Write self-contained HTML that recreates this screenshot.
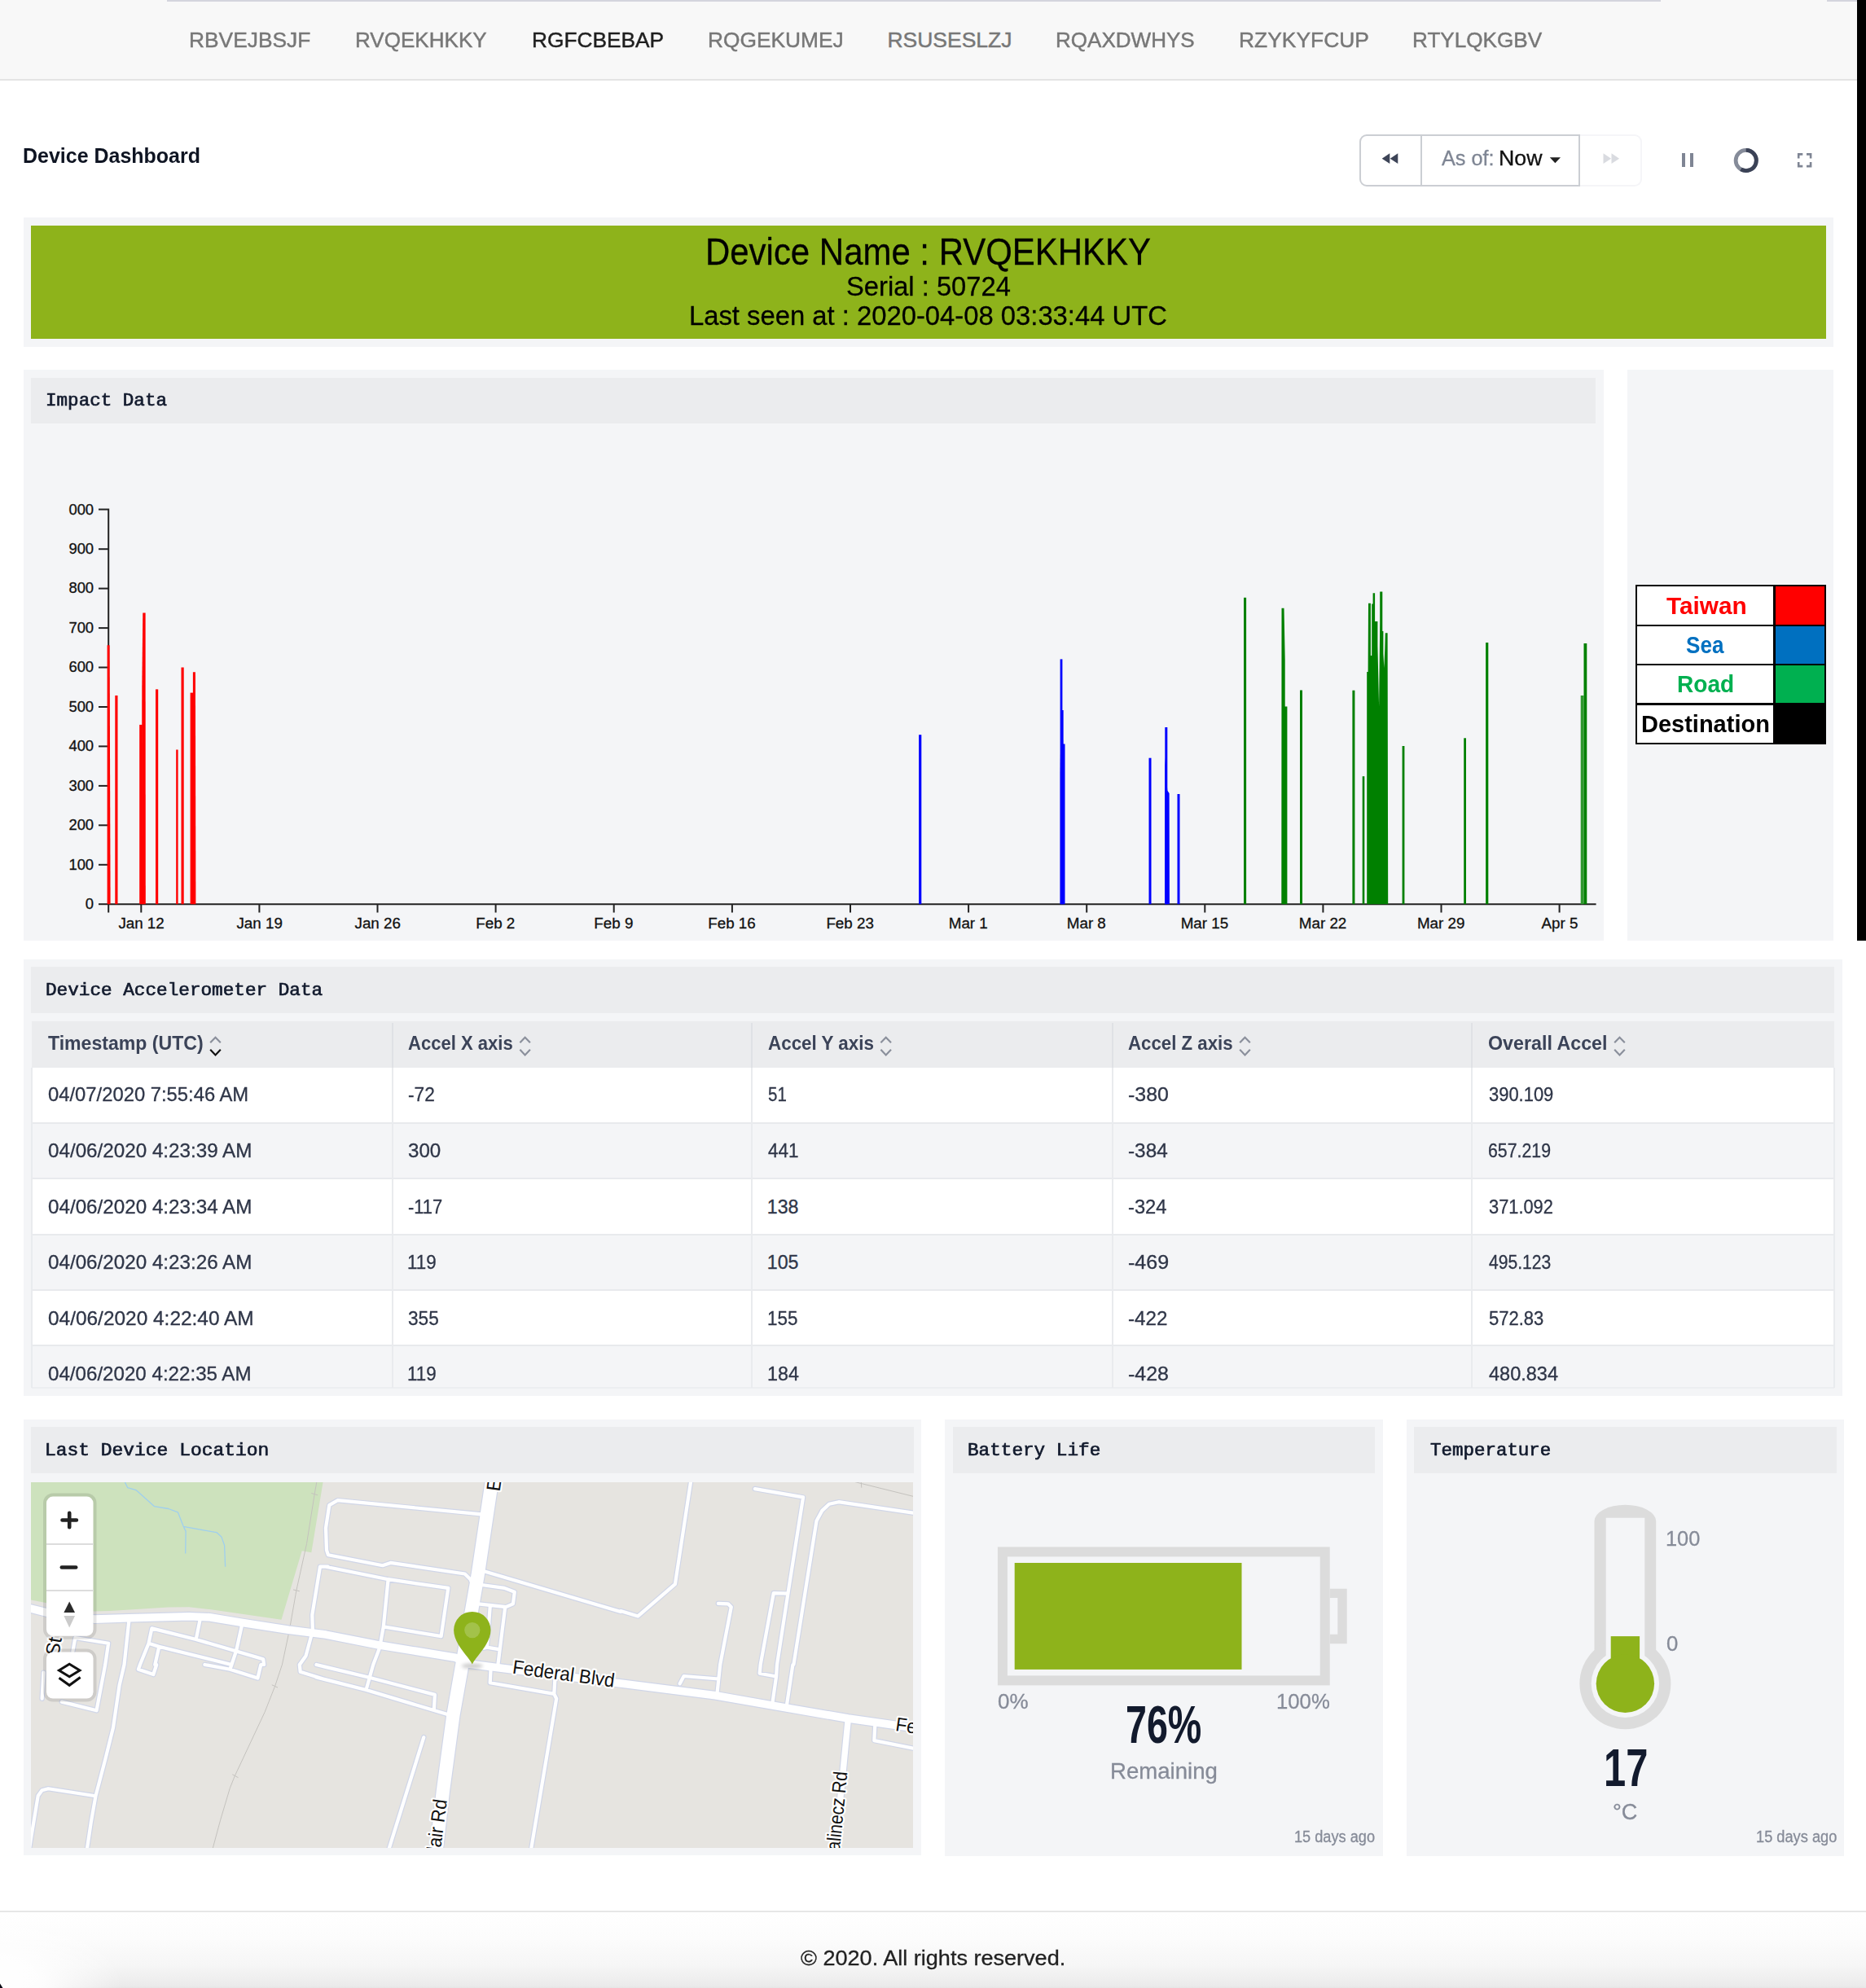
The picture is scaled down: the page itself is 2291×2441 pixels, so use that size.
<!DOCTYPE html><html lang="en"><head><meta charset="utf-8"><title>Device Dashboard</title><style>
html,body{margin:0;padding:0;background:#fff;}
body{width:2291px;height:2441px;position:relative;overflow:hidden;font-family:"Liberation Sans",sans-serif;}
.t{position:absolute;white-space:nowrap;transform-origin:0 0;margin:0;padding:0;display:block;}
.abs{position:absolute;}
.panel{position:absolute;background:#f4f5f7;}
.pbar{position:absolute;background:#ebecee;}
svg{position:absolute;overflow:visible;}
.dc{display:contents;}
</style></head><body>
<nav class="abs" style="left:0;top:0;width:2280px;height:96.5px;background:#f8f8f8;border-bottom:2px solid #e4e4e4;">
<div class="abs" style="left:205px;top:0;width:1834px;height:1.7px;background:#d4d5dd;"></div>
<div class="abs" style="left:2243px;top:0;width:37px;height:1.7px;background:#d4d5dd;"></div>
<a class="t" style="left:232.49px;top:36.37px;font-size:26.50px;line-height:26.50px;color:#777;font-family:'Liberation Sans',sans-serif;font-weight:400;transform:scaleX(0.9941);-webkit-text-stroke:0.45px #777;">RBVEJBSJF</a>
<a class="t" style="left:435.92px;top:36.37px;font-size:26.50px;line-height:26.50px;color:#777;font-family:'Liberation Sans',sans-serif;font-weight:400;transform:scaleX(0.9828);-webkit-text-stroke:0.45px #777;">RVQEKHKKY</a>
<a class="t" style="left:652.70px;top:36.37px;font-size:26.50px;line-height:26.50px;color:#1f1f1f;font-family:'Liberation Sans',sans-serif;font-weight:400;transform:scaleX(0.9911);-webkit-text-stroke:0.45px #1f1f1f;">RGFCBEBAP</a>
<a class="t" style="left:868.89px;top:36.37px;font-size:26.50px;line-height:26.50px;color:#777;font-family:'Liberation Sans',sans-serif;font-weight:400;transform:scaleX(0.9933);-webkit-text-stroke:0.45px #777;">RQGEKUMEJ</a>
<a class="t" style="left:1089.38px;top:36.37px;font-size:26.50px;line-height:26.50px;color:#777;font-family:'Liberation Sans',sans-serif;font-weight:400;-webkit-text-stroke:0.45px #777;">RSUSESLZJ</a>
<a class="t" style="left:1296.12px;top:36.37px;font-size:26.50px;line-height:26.50px;color:#777;font-family:'Liberation Sans',sans-serif;font-weight:400;transform:scaleX(0.9822);-webkit-text-stroke:0.45px #777;">RQAXDWHYS</a>
<a class="t" style="left:1520.69px;top:36.37px;font-size:26.50px;line-height:26.50px;color:#777;font-family:'Liberation Sans',sans-serif;font-weight:400;transform:scaleX(0.9961);-webkit-text-stroke:0.45px #777;">RZYKYFCUP</a>
<a class="t" style="left:1734.21px;top:36.37px;font-size:26.50px;line-height:26.50px;color:#777;font-family:'Liberation Sans',sans-serif;font-weight:400;transform:scaleX(0.9856);-webkit-text-stroke:0.45px #777;">RTYLQKGBV</a>
</nav>
<div class="abs" style="left:2280px;top:0;width:11px;height:1155px;background:#000;"></div>
<header>
<h1 class="t" style="left:27.98px;top:178.05px;font-size:26.40px;line-height:26.40px;color:#0e1422;font-family:'Liberation Sans',sans-serif;font-weight:700;transform:scaleX(0.9466);">Device Dashboard</h1>
<div class="abs" style="left:1668.5px;top:164.5px;width:271.5px;height:64.6px;border:2px solid #cbced3;border-radius:9px 0 0 9px;box-sizing:border-box;background:#fff;"></div>
<div class="abs" style="left:1744px;top:165px;width:2px;height:63.6px;background:#cbced3;"></div>
<div class="abs" style="left:1940px;top:164.5px;width:76px;height:64.6px;border:2px solid #f5f5f8;border-left:none;border-radius:0 9px 9px 0;box-sizing:border-box;background:#fff;"></div>
<svg style="left:1690px;top:180px" width="40" height="32" viewBox="1690 180 40 32"><path d="M1706.3 188.3v12.8l-9.6-6.4zM1716.3 188.3v12.8l-9.6-6.4z" fill="#3d4457"/></svg>
<svg style="left:1960px;top:180px" width="40" height="32" viewBox="1960 180 40 32"><path d="M1968.5 188.3v12.8l9.6-6.4zM1978.5 188.3v12.8l9.6-6.4z" fill="#d9dbe0"/></svg>
<span class="t" style="left:1770.10px;top:181.86px;font-size:25.80px;line-height:25.80px;color:#7f8694;font-family:'Liberation Sans',sans-serif;font-weight:400;transform:scaleX(0.9792);-webkit-text-stroke:0.3px #7f8694;">As of:</span>
<span class="t" style="left:1840.36px;top:181.86px;font-size:25.80px;line-height:25.80px;color:#111;font-family:'Liberation Sans',sans-serif;font-weight:400;transform:scaleX(1.0349);-webkit-text-stroke:0.3px #111;">Now</span>
<svg style="left:1900px;top:190px" width="20" height="14" viewBox="1900 190 20 14"><path d="M1902.8 193.3h13.2l-6.6 7z" fill="#222"/></svg>
<div class="abs" style="left:2064.5px;top:188px;width:4.6px;height:17.3px;background:#7f8594;"></div>
<div class="abs" style="left:2074.8px;top:188px;width:4.6px;height:17.3px;background:#7f8594;"></div>
<svg style="left:2125px;top:178px" width="38" height="38" viewBox="2125 178 38 38"><circle cx="2143.7" cy="197" r="12.6" fill="none" stroke="#858b99" stroke-width="4.8"/><path d="M2143.7 184.4a12.6 12.6 0 1 1 -6.3 23.5" fill="none" stroke="#3b4256" stroke-width="4.8"/></svg>
<svg style="left:2204px;top:186px" width="24" height="22" viewBox="2204 186 24 22"><path d="M2208.2 194.5v-5.1h5.1M2218 189.4h5.1v5.1M2223.1 199v5.1h-5.1M2213.3 204.1h-5.1v-5.1" fill="none" stroke="#7f8594" stroke-width="2.6"/></svg>
</header>
<section class="panel" style="left:28.6px;top:267px;width:2222.4px;height:158.6px;"></section>
<div class="abs" style="left:38px;top:277px;width:2203.7px;height:138.8px;background:#8eb31b;"></div>
<span class="t" style="left:866.04px;top:286.49px;font-size:46.20px;line-height:46.20px;color:#000;font-family:'Liberation Sans',sans-serif;font-weight:400;transform:scaleX(0.9080);-webkit-text-stroke:0.3px #000;">Device Name : RVQEKHKKY</span>
<span class="t" style="left:1038.63px;top:334.50px;font-size:33.90px;line-height:33.90px;color:#000;font-family:'Liberation Sans',sans-serif;font-weight:400;transform:scaleX(0.9652);-webkit-text-stroke:0.3px #000;">Serial : 50724</span>
<span class="t" style="left:846.18px;top:370.90px;font-size:33.90px;line-height:33.90px;color:#000;font-family:'Liberation Sans',sans-serif;font-weight:400;transform:scaleX(0.9675);-webkit-text-stroke:0.3px #000;">Last seen at : 2020-04-08 03:33:44 UTC</span>
<section class="panel" style="left:28.6px;top:454.2px;width:1940.7px;height:700.8px;"></section>
<div class="pbar" style="left:38.2px;top:463.6px;width:1921.3px;height:56.1px;"></div>
<h2 class="t" style="left:56.05px;top:481.50px;font-size:21.40px;line-height:21.40px;color:#121a2d;font-family:'Liberation Mono',monospace;font-weight:400;transform:scaleX(1.0551);-webkit-text-stroke:0.65px #121a2d;">Impact Data</h2>
<svg style="left:0;top:0" width="2291" height="1160" viewBox="0 0 2291 1160">
<defs><clipPath id="cc"><rect x="40" y="560" width="1925" height="600"/></clipPath></defs>
<path d="M121,625.6H133.2V1110.2" fill="none" stroke="#222" stroke-width="2"/>
<path d="M133.2,1120.5V1110.2H1959.6" fill="none" stroke="#222" stroke-width="2"/>
<path d="M121,1110.2H133.2" stroke="#222" stroke-width="2"/>
<path d="M121,1061.8H133.2" stroke="#222" stroke-width="2"/>
<path d="M121,1013.3H133.2" stroke="#222" stroke-width="2"/>
<path d="M121,964.9H133.2" stroke="#222" stroke-width="2"/>
<path d="M121,916.4H133.2" stroke="#222" stroke-width="2"/>
<path d="M121,868.0H133.2" stroke="#222" stroke-width="2"/>
<path d="M121,819.5H133.2" stroke="#222" stroke-width="2"/>
<path d="M121,771.1H133.2" stroke="#222" stroke-width="2"/>
<path d="M121,722.6H133.2" stroke="#222" stroke-width="2"/>
<path d="M121,674.2H133.2" stroke="#222" stroke-width="2"/>
<path d="M173.3,1110.2V1120.5" stroke="#222" stroke-width="2"/>
<path d="M318.4,1110.2V1120.5" stroke="#222" stroke-width="2"/>
<path d="M463.5,1110.2V1120.5" stroke="#222" stroke-width="2"/>
<path d="M608.6,1110.2V1120.5" stroke="#222" stroke-width="2"/>
<path d="M753.7,1110.2V1120.5" stroke="#222" stroke-width="2"/>
<path d="M898.9,1110.2V1120.5" stroke="#222" stroke-width="2"/>
<path d="M1044.0,1110.2V1120.5" stroke="#222" stroke-width="2"/>
<path d="M1189.1,1110.2V1120.5" stroke="#222" stroke-width="2"/>
<path d="M1334.2,1110.2V1120.5" stroke="#222" stroke-width="2"/>
<path d="M1479.3,1110.2V1120.5" stroke="#222" stroke-width="2"/>
<path d="M1624.4,1110.2V1120.5" stroke="#222" stroke-width="2"/>
<path d="M1769.5,1110.2V1120.5" stroke="#222" stroke-width="2"/>
<path d="M1914.6,1110.2V1120.5" stroke="#222" stroke-width="2"/>
<polygon points="131.6,792.3 134.6,792.3 135.6,1110.2 131.6,1110.2" fill="#ff0000"/>
<rect x="141.3" y="854.0" width="3.2" height="256.2" fill="#ff0000"/>
<rect x="171.2" y="889.9" width="3.6" height="220.3" fill="#ff0000"/>
<polygon points="175.3,752.6 178.6,752.6 178.8,1110.2 174.0,1110.2 174.3,846" fill="#ff0000"/>
<rect x="191.0" y="846.4" width="3.2" height="263.8" fill="#ff0000"/>
<rect x="216.2" y="920.5" width="2.4" height="189.7" fill="#ff0000"/>
<rect x="222.5" y="819.5" width="3.2" height="290.7" fill="#ff0000"/>
<rect x="233.6" y="850.6" width="3.6" height="259.6" fill="#ff0000"/>
<polygon points="236.9,825.2 239.9,825.2 240.4,1110.2 236.9,1110.2" fill="#ff0000"/>
<rect x="1128.1" y="902.2" width="3.2" height="208.0" fill="#0000ff"/>
<rect x="1301.6" y="809.4" width="2.8" height="300.8" fill="#0000ff"/>
<polygon points="1302.6,872 1305.6,872 1306.0,1110.2 1301.7,1110.2 1301.7,950" fill="#0000ff"/>
<rect x="1304.5" y="913.5" width="3.0" height="196.7" fill="#0000ff"/>
<rect x="1410.5" y="930.7" width="3.0" height="179.5" fill="#0000ff"/>
<rect x="1430.3" y="893.0" width="3.0" height="217.2" fill="#0000ff"/>
<polygon points="1430.3,930 1433.3,970.8 1435.6,974 1435.9,1110.2 1430.0,1110.2" fill="#0000ff"/>
<rect x="1445.5" y="975.0" width="3.0" height="135.2" fill="#0000ff"/>
<rect x="1527.0" y="733.8" width="3.1" height="376.4" fill="#008000"/>
<polygon points="1573.5,746.8 1576.5,746.8 1577.7,810 1577.7,867.6 1580.4,867.6 1580.4,1110.2 1573.3,1110.2" fill="#008000"/>
<rect x="1596.0" y="847.5" width="3.0" height="262.7" fill="#008000"/>
<rect x="1660.4" y="847.7" width="3.0" height="262.5" fill="#008000"/>
<rect x="1672.7" y="953.2" width="2.6" height="157.0" fill="#008000"/>
<polygon points="1678.2,1110.2 1678.2,825.0 1679.6,825.0 1680.0,740.8 1682.9,740.8 1682.9,805.0 1684.2,805.0 1684.2,741.5 1685.6,741.5 1685.6,728.3 1688.1,728.3 1688.1,763.0 1691.4,763.0 1691.4,793.0 1693.1,867.0 1694.2,765.0 1694.2,726.4 1697.3,726.4 1697.3,775.0 1698.4,775.0 1698.4,802.0 1699.3,820.0 1700.3,797.0 1700.8,777.3 1703.6,777.3 1704.2,1110.2" fill="#008000"/>
<rect x="1721.6" y="916.0" width="2.8" height="194.2" fill="#008000"/>
<rect x="1797.2" y="906.3" width="2.8" height="203.9" fill="#008000"/>
<rect x="1824.1" y="789.0" width="3.2" height="321.2" fill="#008000"/>
<rect x="1940.7" y="854.0" width="3.8" height="256.2" fill="#2f982f"/>
<rect x="1944.5" y="790.0" width="3.8" height="320.2" fill="#008000"/>
</svg>
<span class="t" style="left:104.83px;top:1101.02px;font-size:18.40px;line-height:18.40px;color:#111;font-family:'Liberation Sans',sans-serif;font-weight:400;-webkit-text-stroke:0.3px #111;">0</span>
<span class="t" style="left:84.41px;top:1052.57px;font-size:18.40px;line-height:18.40px;color:#111;font-family:'Liberation Sans',sans-serif;font-weight:400;-webkit-text-stroke:0.3px #111;">100</span>
<span class="t" style="left:84.41px;top:1004.12px;font-size:18.40px;line-height:18.40px;color:#111;font-family:'Liberation Sans',sans-serif;font-weight:400;-webkit-text-stroke:0.3px #111;">200</span>
<span class="t" style="left:84.41px;top:955.67px;font-size:18.40px;line-height:18.40px;color:#111;font-family:'Liberation Sans',sans-serif;font-weight:400;-webkit-text-stroke:0.3px #111;">300</span>
<span class="t" style="left:84.41px;top:907.22px;font-size:18.40px;line-height:18.40px;color:#111;font-family:'Liberation Sans',sans-serif;font-weight:400;-webkit-text-stroke:0.3px #111;">400</span>
<span class="t" style="left:84.41px;top:858.77px;font-size:18.40px;line-height:18.40px;color:#111;font-family:'Liberation Sans',sans-serif;font-weight:400;-webkit-text-stroke:0.3px #111;">500</span>
<span class="t" style="left:84.41px;top:810.32px;font-size:18.40px;line-height:18.40px;color:#111;font-family:'Liberation Sans',sans-serif;font-weight:400;-webkit-text-stroke:0.3px #111;">600</span>
<span class="t" style="left:84.41px;top:761.87px;font-size:18.40px;line-height:18.40px;color:#111;font-family:'Liberation Sans',sans-serif;font-weight:400;-webkit-text-stroke:0.3px #111;">700</span>
<span class="t" style="left:84.41px;top:713.42px;font-size:18.40px;line-height:18.40px;color:#111;font-family:'Liberation Sans',sans-serif;font-weight:400;-webkit-text-stroke:0.3px #111;">800</span>
<span class="t" style="left:84.41px;top:664.97px;font-size:18.40px;line-height:18.40px;color:#111;font-family:'Liberation Sans',sans-serif;font-weight:400;-webkit-text-stroke:0.3px #111;">900</span>
<span class="t" style="left:84.41px;top:616.52px;font-size:18.40px;line-height:18.40px;color:#111;font-family:'Liberation Sans',sans-serif;font-weight:400;-webkit-text-stroke:0.3px #111;">000</span>
<span class="t" style="left:145.38px;top:1124.79px;font-size:18.80px;line-height:18.80px;color:#111;font-family:'Liberation Sans',sans-serif;font-weight:400;-webkit-text-stroke:0.3px #111;">Jan 12</span>
<span class="t" style="left:290.48px;top:1124.79px;font-size:18.80px;line-height:18.80px;color:#111;font-family:'Liberation Sans',sans-serif;font-weight:400;-webkit-text-stroke:0.3px #111;">Jan 19</span>
<span class="t" style="left:435.54px;top:1124.79px;font-size:18.80px;line-height:18.80px;color:#111;font-family:'Liberation Sans',sans-serif;font-weight:400;-webkit-text-stroke:0.3px #111;">Jan 26</span>
<span class="t" style="left:584.25px;top:1124.79px;font-size:18.80px;line-height:18.80px;color:#111;font-family:'Liberation Sans',sans-serif;font-weight:400;-webkit-text-stroke:0.3px #111;">Feb 2</span>
<span class="t" style="left:729.35px;top:1124.79px;font-size:18.80px;line-height:18.80px;color:#111;font-family:'Liberation Sans',sans-serif;font-weight:400;-webkit-text-stroke:0.3px #111;">Feb 9</span>
<span class="t" style="left:869.29px;top:1124.79px;font-size:18.80px;line-height:18.80px;color:#111;font-family:'Liberation Sans',sans-serif;font-weight:400;-webkit-text-stroke:0.3px #111;">Feb 16</span>
<span class="t" style="left:1014.39px;top:1124.79px;font-size:18.80px;line-height:18.80px;color:#111;font-family:'Liberation Sans',sans-serif;font-weight:400;-webkit-text-stroke:0.3px #111;">Feb 23</span>
<span class="t" style="left:1164.75px;top:1124.79px;font-size:18.80px;line-height:18.80px;color:#111;font-family:'Liberation Sans',sans-serif;font-weight:400;-webkit-text-stroke:0.3px #111;">Mar 1</span>
<span class="t" style="left:1309.81px;top:1124.79px;font-size:18.80px;line-height:18.80px;color:#111;font-family:'Liberation Sans',sans-serif;font-weight:400;-webkit-text-stroke:0.3px #111;">Mar 8</span>
<span class="t" style="left:1449.69px;top:1124.79px;font-size:18.80px;line-height:18.80px;color:#111;font-family:'Liberation Sans',sans-serif;font-weight:400;-webkit-text-stroke:0.3px #111;">Mar 15</span>
<span class="t" style="left:1594.84px;top:1124.79px;font-size:18.80px;line-height:18.80px;color:#111;font-family:'Liberation Sans',sans-serif;font-weight:400;-webkit-text-stroke:0.3px #111;">Mar 22</span>
<span class="t" style="left:1739.94px;top:1124.79px;font-size:18.80px;line-height:18.80px;color:#111;font-family:'Liberation Sans',sans-serif;font-weight:400;-webkit-text-stroke:0.3px #111;">Mar 29</span>
<span class="t" style="left:1892.51px;top:1124.79px;font-size:18.80px;line-height:18.80px;color:#111;font-family:'Liberation Sans',sans-serif;font-weight:400;-webkit-text-stroke:0.3px #111;">Apr 5</span>
<section class="panel" style="left:1997.8px;top:454.2px;width:253.2px;height:700.8px;"></section>
<div class="abs" style="left:2009.3px;top:718.7px;width:231.89999999999986px;height:194.0px;background:#fff;"></div>
<div class="abs" style="left:2178.6px;top:718.7px;width:62.59999999999991px;height:49.09999999999991px;background:#ff0000;"></div>
<div class="abs" style="left:2178.6px;top:767.8px;width:62.59999999999991px;height:47.90000000000009px;background:#0070c0;"></div>
<div class="abs" style="left:2178.6px;top:815.7px;width:62.59999999999991px;height:48.799999999999955px;background:#00b050;"></div>
<div class="abs" style="left:2178.6px;top:864.5px;width:62.59999999999991px;height:48.200000000000045px;background:#000000;"></div>
<div class="abs" style="left:2008.3px;top:717.7px;width:233.89999999999986px;height:196.0px;border:2.4px solid #000;box-sizing:border-box;"></div>
<div class="abs" style="left:2009.3px;top:766.5999999999999px;width:231.89999999999986px;height:2.4px;background:#000;"></div>
<div class="abs" style="left:2009.3px;top:814.5px;width:231.89999999999986px;height:2.4px;background:#000;"></div>
<div class="abs" style="left:2009.3px;top:863.3px;width:231.89999999999986px;height:2.4px;background:#000;"></div>
<div class="abs" style="left:2177.4px;top:718.7px;width:2.4px;height:194.0px;background:#000;"></div>
<span class="t" style="left:2045.74px;top:729.79px;font-size:29.20px;line-height:29.20px;color:#ff0000;font-family:'Liberation Sans',sans-serif;font-weight:700;transform:scaleX(1.0204);">Taiwan</span>
<span class="t" style="left:2070.22px;top:777.69px;font-size:29.20px;line-height:29.20px;color:#0070c0;font-family:'Liberation Sans',sans-serif;font-weight:700;transform:scaleX(0.8949);">Sea</span>
<span class="t" style="left:2058.94px;top:825.94px;font-size:29.20px;line-height:29.20px;color:#00b050;font-family:'Liberation Sans',sans-serif;font-weight:700;transform:scaleX(0.9613);">Road</span>
<span class="t" style="left:2014.88px;top:874.55px;font-size:29.20px;line-height:29.20px;color:#000;font-family:'Liberation Sans',sans-serif;font-weight:700;transform:scaleX(0.9935);">Destination</span>
<section class="panel" style="left:28.6px;top:1177.7px;width:2233.4px;height:536.8px;"></section>
<div class="pbar" style="left:38.2px;top:1187.2px;width:2214.3px;height:56.5px;"></div>
<h2 class="t" style="left:56.00px;top:1205.50px;font-size:21.40px;line-height:21.40px;color:#121a2d;font-family:'Liberation Mono',monospace;font-weight:400;transform:scaleX(1.0601);-webkit-text-stroke:0.65px #121a2d;">Device Accelerometer Data</h2>
<div class="abs" style="left:39.0px;top:1253.9px;width:2213.0px;height:56.799999999999955px;background:#ebecee;"></div>
<div class="abs" style="left:39.0px;top:1310.7px;width:2213.0px;height:68.3px;background:#ffffff;"></div>
<div class="abs" style="left:39.0px;top:1379.0px;width:2213.0px;height:68.3px;background:#f4f5f7;"></div>
<div class="abs" style="left:39.0px;top:1378.0px;width:2213.0px;height:2px;background:#e8eaed;"></div>
<div class="abs" style="left:39.0px;top:1447.3px;width:2213.0px;height:68.3px;background:#ffffff;"></div>
<div class="abs" style="left:39.0px;top:1446.3px;width:2213.0px;height:2px;background:#e8eaed;"></div>
<div class="abs" style="left:39.0px;top:1515.6px;width:2213.0px;height:68.3px;background:#f4f5f7;"></div>
<div class="abs" style="left:39.0px;top:1514.6px;width:2213.0px;height:2px;background:#e8eaed;"></div>
<div class="abs" style="left:39.0px;top:1583.9px;width:2213.0px;height:68.3px;background:#ffffff;"></div>
<div class="abs" style="left:39.0px;top:1582.9px;width:2213.0px;height:2px;background:#e8eaed;"></div>
<div class="abs" style="left:39.0px;top:1652.2px;width:2213.0px;height:51.6px;background:#f4f5f7;"></div>
<div class="abs" style="left:39.0px;top:1651.2px;width:2213.0px;height:2px;background:#e8eaed;"></div>
<div class="abs" style="left:39.0px;top:1702.8px;width:2213.0px;height:2px;background:#eceef1;"></div>
<div class="abs" style="left:38.0px;top:1310.7px;width:2px;height:393.0999999999999px;background:#e9ebee;"></div>
<div class="abs" style="left:2251.0px;top:1310.7px;width:2px;height:393.0999999999999px;background:#e9ebee;"></div>
<div class="abs" style="left:480.7px;top:1255.9px;width:2px;height:54.799999999999955px;background:#dfe1e5;"></div>
<div class="abs" style="left:480.7px;top:1310.7px;width:2px;height:393.0999999999999px;background:#e9ebee;"></div>
<div class="abs" style="left:922.2px;top:1255.9px;width:2px;height:54.799999999999955px;background:#dfe1e5;"></div>
<div class="abs" style="left:922.2px;top:1310.7px;width:2px;height:393.0999999999999px;background:#e9ebee;"></div>
<div class="abs" style="left:1364.8px;top:1255.9px;width:2px;height:54.799999999999955px;background:#dfe1e5;"></div>
<div class="abs" style="left:1364.8px;top:1310.7px;width:2px;height:393.0999999999999px;background:#e9ebee;"></div>
<div class="abs" style="left:1806.4px;top:1255.9px;width:2px;height:54.799999999999955px;background:#dfe1e5;"></div>
<div class="abs" style="left:1806.4px;top:1310.7px;width:2px;height:393.0999999999999px;background:#e9ebee;"></div>
<svg style="left:0;top:0" width="2291" height="1320" viewBox="0 0 2291 1320">
<path d="M258.2,1280.2L264.5,1273.8L270.8,1280.2" fill="none" stroke="#8a8f9b" stroke-width="2.2"/>
<path d="M258.2,1288.8L264.5,1295.4L270.8,1288.8" fill="none" stroke="#111" stroke-width="2.2"/>
<path d="M638.4,1280.2L644.6,1273.8L650.9,1280.2" fill="none" stroke="#8a8f9b" stroke-width="2.2"/>
<path d="M638.4,1288.8L644.6,1295.4L650.9,1288.8" fill="none" stroke="#8a8f9b" stroke-width="2.2"/>
<path d="M1081.4,1280.2L1087.7,1273.8L1094.0,1280.2" fill="none" stroke="#8a8f9b" stroke-width="2.2"/>
<path d="M1081.4,1288.8L1087.7,1295.4L1094.0,1288.8" fill="none" stroke="#8a8f9b" stroke-width="2.2"/>
<path d="M1522.2,1280.2L1528.5,1273.8L1534.8,1280.2" fill="none" stroke="#8a8f9b" stroke-width="2.2"/>
<path d="M1522.2,1288.8L1528.5,1295.4L1534.8,1288.8" fill="none" stroke="#8a8f9b" stroke-width="2.2"/>
<path d="M1982.2,1280.2L1988.5,1273.8L1994.8,1280.2" fill="none" stroke="#8a8f9b" stroke-width="2.2"/>
<path d="M1982.2,1288.8L1988.5,1295.4L1994.8,1288.8" fill="none" stroke="#8a8f9b" stroke-width="2.2"/>
</svg>
<table class="dc"><thead class="dc"><tr class="dc">
<th class="dc"><span class="t" style="left:59.17px;top:1269.48px;font-size:24.60px;line-height:24.60px;color:#3b4358;font-family:'Liberation Sans',sans-serif;font-weight:700;transform:scaleX(0.9384);">Timestamp (UTC)</span></th>
<th class="dc"><span class="t" style="left:500.95px;top:1269.48px;font-size:24.60px;line-height:24.60px;color:#3b4358;font-family:'Liberation Sans',sans-serif;font-weight:700;transform:scaleX(0.8961);">Accel X axis</span></th>
<th class="dc"><span class="t" style="left:942.94px;top:1269.48px;font-size:24.60px;line-height:24.60px;color:#3b4358;font-family:'Liberation Sans',sans-serif;font-weight:700;transform:scaleX(0.9107);">Accel Y axis</span></th>
<th class="dc"><span class="t" style="left:1385.34px;top:1269.48px;font-size:24.60px;line-height:24.60px;color:#3b4358;font-family:'Liberation Sans',sans-serif;font-weight:700;transform:scaleX(0.9047);">Accel Z axis</span></th>
<th class="dc"><span class="t" style="left:1827.47px;top:1269.48px;font-size:24.60px;line-height:24.60px;color:#3b4358;font-family:'Liberation Sans',sans-serif;font-weight:700;transform:scaleX(0.9456);">Overall Accel</span></th>
</tr></thead><tbody class="dc">
<tr class="dc">
<td class="dc"><span class="t" style="left:58.57px;top:1333.36px;font-size:23.20px;line-height:23.20px;color:#2f3648;font-family:'Liberation Sans',sans-serif;font-weight:400;transform:scaleX(1.0264);-webkit-text-stroke:0.3px #2f3648;">04/07/2020 7:55:46 AM</span></td>
<td class="dc"><span class="t" style="left:500.59px;top:1333.36px;font-size:23.20px;line-height:23.20px;color:#2f3648;font-family:'Liberation Sans',sans-serif;font-weight:400;transform:scaleX(0.9762);-webkit-text-stroke:0.3px #2f3648;">-72</span></td>
<td class="dc"><span class="t" style="left:942.68px;top:1333.36px;font-size:23.20px;line-height:23.20px;color:#2f3648;font-family:'Liberation Sans',sans-serif;font-weight:400;transform:scaleX(0.8831);-webkit-text-stroke:0.3px #2f3648;">51</span></td>
<td class="dc"><span class="t" style="left:1384.90px;top:1333.36px;font-size:23.20px;line-height:23.20px;color:#2f3648;font-family:'Liberation Sans',sans-serif;font-weight:400;transform:scaleX(1.0748);-webkit-text-stroke:0.3px #2f3648;">-380</span></td>
<td class="dc"><span class="t" style="left:1827.63px;top:1333.36px;font-size:23.20px;line-height:23.20px;color:#2f3648;font-family:'Liberation Sans',sans-serif;font-weight:400;transform:scaleX(0.9462);-webkit-text-stroke:0.3px #2f3648;">390.109</span></td>
</tr>
<tr class="dc">
<td class="dc"><span class="t" style="left:58.55px;top:1401.96px;font-size:23.20px;line-height:23.20px;color:#2f3648;font-family:'Liberation Sans',sans-serif;font-weight:400;transform:scaleX(1.0441);-webkit-text-stroke:0.3px #2f3648;">04/06/2020 4:23:39 AM</span></td>
<td class="dc"><span class="t" style="left:500.66px;top:1401.96px;font-size:23.20px;line-height:23.20px;color:#2f3648;font-family:'Liberation Sans',sans-serif;font-weight:400;transform:scaleX(1.0404);-webkit-text-stroke:0.3px #2f3648;">300</span></td>
<td class="dc"><span class="t" style="left:943.05px;top:1401.96px;font-size:23.20px;line-height:23.20px;color:#2f3648;font-family:'Liberation Sans',sans-serif;font-weight:400;transform:scaleX(0.9698);-webkit-text-stroke:0.3px #2f3648;">441</span></td>
<td class="dc"><span class="t" style="left:1384.93px;top:1401.96px;font-size:23.20px;line-height:23.20px;color:#2f3648;font-family:'Liberation Sans',sans-serif;font-weight:400;transform:scaleX(1.0492);-webkit-text-stroke:0.3px #2f3648;">-384</span></td>
<td class="dc"><span class="t" style="left:1827.33px;top:1401.96px;font-size:23.20px;line-height:23.20px;color:#2f3648;font-family:'Liberation Sans',sans-serif;font-weight:400;transform:scaleX(0.9184);-webkit-text-stroke:0.3px #2f3648;">657.219</span></td>
</tr>
<tr class="dc">
<td class="dc"><span class="t" style="left:58.55px;top:1470.56px;font-size:23.20px;line-height:23.20px;color:#2f3648;font-family:'Liberation Sans',sans-serif;font-weight:400;transform:scaleX(1.0441);-webkit-text-stroke:0.3px #2f3648;">04/06/2020 4:23:34 AM</span></td>
<td class="dc"><span class="t" style="left:500.62px;top:1470.56px;font-size:23.20px;line-height:23.20px;color:#2f3648;font-family:'Liberation Sans',sans-serif;font-weight:400;transform:scaleX(0.9441);-webkit-text-stroke:0.3px #2f3648;">-117</span></td>
<td class="dc"><span class="t" style="left:941.76px;top:1470.56px;font-size:23.20px;line-height:23.20px;color:#2f3648;font-family:'Liberation Sans',sans-serif;font-weight:400;-webkit-text-stroke:0.3px #2f3648;">138</span></td>
<td class="dc"><span class="t" style="left:1384.95px;top:1470.56px;font-size:23.20px;line-height:23.20px;color:#2f3648;font-family:'Liberation Sans',sans-serif;font-weight:400;transform:scaleX(1.0225);-webkit-text-stroke:0.3px #2f3648;">-324</span></td>
<td class="dc"><span class="t" style="left:1827.64px;top:1470.56px;font-size:23.20px;line-height:23.20px;color:#2f3648;font-family:'Liberation Sans',sans-serif;font-weight:400;transform:scaleX(0.9413);-webkit-text-stroke:0.3px #2f3648;">371.092</span></td>
</tr>
<tr class="dc">
<td class="dc"><span class="t" style="left:58.55px;top:1539.16px;font-size:23.20px;line-height:23.20px;color:#2f3648;font-family:'Liberation Sans',sans-serif;font-weight:400;transform:scaleX(1.0441);-webkit-text-stroke:0.3px #2f3648;">04/06/2020 4:23:26 AM</span></td>
<td class="dc"><span class="t" style="left:499.82px;top:1539.16px;font-size:23.20px;line-height:23.20px;color:#2f3648;font-family:'Liberation Sans',sans-serif;font-weight:400;transform:scaleX(0.9643);-webkit-text-stroke:0.3px #2f3648;">119</span></td>
<td class="dc"><span class="t" style="left:941.76px;top:1539.16px;font-size:23.20px;line-height:23.20px;color:#2f3648;font-family:'Liberation Sans',sans-serif;font-weight:400;-webkit-text-stroke:0.3px #2f3648;">105</span></td>
<td class="dc"><span class="t" style="left:1384.90px;top:1539.16px;font-size:23.20px;line-height:23.20px;color:#2f3648;font-family:'Liberation Sans',sans-serif;font-weight:400;transform:scaleX(1.0804);-webkit-text-stroke:0.3px #2f3648;">-469</span></td>
<td class="dc"><span class="t" style="left:1827.98px;top:1539.16px;font-size:23.20px;line-height:23.20px;color:#2f3648;font-family:'Liberation Sans',sans-serif;font-weight:400;transform:scaleX(0.9094);-webkit-text-stroke:0.3px #2f3648;">495.123</span></td>
</tr>
<tr class="dc">
<td class="dc"><span class="t" style="left:58.54px;top:1607.76px;font-size:23.20px;line-height:23.20px;color:#2f3648;font-family:'Liberation Sans',sans-serif;font-weight:400;transform:scaleX(1.0534);-webkit-text-stroke:0.3px #2f3648;">04/06/2020 4:22:40 AM</span></td>
<td class="dc"><span class="t" style="left:500.71px;top:1607.76px;font-size:23.20px;line-height:23.20px;color:#2f3648;font-family:'Liberation Sans',sans-serif;font-weight:400;transform:scaleX(0.9759);-webkit-text-stroke:0.3px #2f3648;">355</span></td>
<td class="dc"><span class="t" style="left:941.82px;top:1607.76px;font-size:23.20px;line-height:23.20px;color:#2f3648;font-family:'Liberation Sans',sans-serif;font-weight:400;transform:scaleX(0.9650);-webkit-text-stroke:0.3px #2f3648;">155</span></td>
<td class="dc"><span class="t" style="left:1384.93px;top:1607.76px;font-size:23.20px;line-height:23.20px;color:#2f3648;font-family:'Liberation Sans',sans-serif;font-weight:400;transform:scaleX(1.0421);-webkit-text-stroke:0.3px #2f3648;">-422</span></td>
<td class="dc"><span class="t" style="left:1827.52px;top:1607.76px;font-size:23.20px;line-height:23.20px;color:#2f3648;font-family:'Liberation Sans',sans-serif;font-weight:400;transform:scaleX(0.9489);-webkit-text-stroke:0.3px #2f3648;">572.83</span></td>
</tr>
<tr class="dc">
<td class="dc"><span class="t" style="left:58.55px;top:1676.36px;font-size:23.20px;line-height:23.20px;color:#2f3648;font-family:'Liberation Sans',sans-serif;font-weight:400;transform:scaleX(1.0407);-webkit-text-stroke:0.3px #2f3648;">04/06/2020 4:22:35 AM</span></td>
<td class="dc"><span class="t" style="left:499.82px;top:1676.36px;font-size:23.20px;line-height:23.20px;color:#2f3648;font-family:'Liberation Sans',sans-serif;font-weight:400;transform:scaleX(0.9643);-webkit-text-stroke:0.3px #2f3648;">119</span></td>
<td class="dc"><span class="t" style="left:941.75px;top:1676.36px;font-size:23.20px;line-height:23.20px;color:#2f3648;font-family:'Liberation Sans',sans-serif;font-weight:400;transform:scaleX(1.0053);-webkit-text-stroke:0.3px #2f3648;">184</span></td>
<td class="dc"><span class="t" style="left:1384.90px;top:1676.36px;font-size:23.20px;line-height:23.20px;color:#2f3648;font-family:'Liberation Sans',sans-serif;font-weight:400;transform:scaleX(1.0776);-webkit-text-stroke:0.3px #2f3648;">-428</span></td>
<td class="dc"><span class="t" style="left:1827.93px;top:1676.36px;font-size:23.20px;line-height:23.20px;color:#2f3648;font-family:'Liberation Sans',sans-serif;font-weight:400;transform:scaleX(1.0142);-webkit-text-stroke:0.3px #2f3648;">480.834</span></td>
</tr>
</tbody></table>
<div class="abs" style="left:30px;top:1704.8px;width:2231px;height:9.7px;background:#f4f5f7;"></div>
<section class="panel" style="left:28.6px;top:1742.8px;width:1102.8px;height:535.6px;"></section>
<div class="pbar" style="left:38.2px;top:1752px;width:1083.4px;height:57.2px;"></div>
<h2 class="t" style="left:54.56px;top:1770.90px;font-size:21.40px;line-height:21.40px;color:#121a2d;font-family:'Liberation Mono',monospace;font-weight:400;transform:scaleX(1.0720);-webkit-text-stroke:0.65px #121a2d;">Last Device Location</h2>
<svg style="left:38px;top:1820px;overflow:hidden" width="1083.4" height="449.2" viewBox="0 0 1083.4 449.2">
<rect x="0" y="0" width="1083.4" height="449.2" fill="#e6e4e0"/>
<path d="M0.0,-2.0 L358.9,-2.0 L344.3,86.3 L332.7,84.3 L307.5,168.7 L219.2,156.1 L194.0,153.2 L168.8,153.6 L97.0,158.0 L77.6,158.6 L19.4,148.3 L0.0,144.5Z" fill="#cde2bd"/>
<path d="M114.5,-2.0 L118.7,6.7 L129.0,9.6 L151.3,29.6 L168.8,32.5 L180.4,36.8 L187.2,54.3 L190.1,60.1 L189.7,87.6M187.2,54.3 L213.4,59.1 L227.9,61.6 L233.8,66.9 L237.6,77.5 L238.6,103.7" fill="none" stroke="#9fcfee" stroke-width="1.3" stroke-linejoin="round"/>
<path d="M351.1,-2.0 L348.2,14.5 L338.5,75.6 L325.9,132.8 L317.2,182.3 L308.4,224.0 L299.7,250.2 L287.1,282.2 L250.2,360.8 L244.4,375.3 L232.8,414.1 L223.1,450.0M1005.3,-2.0 L1083.5,17.4M344.3,13.5 L352.1,15.8M322.0,131.9 L329.8,133.8M295.8,248.8 L303.0,252.1M247.3,358.8 L254.5,362.7M1019.2,-1.0 L1019.8,6.7" fill="none" stroke="#c4c2be" stroke-width="1"/>
<g fill="none" stroke-linejoin="round" stroke-linecap="round">
<path d="M120.3,170.6 L114.5,224.0 L114.5,224.0 L108.6,249.2 L100.9,301.6 L91.2,340.4 L79.5,385.0 L73.7,418.0 L68.9,450.0M207.6,168.7 L202.7,193.0M259.0,175.5 L252.2,206.5 L246.4,224.0 L246.4,224.0 L244.4,229.8M133.9,224.0 L144.5,197.8 L148.4,179.4 L202.7,193.0 L252.2,207.5 L285.2,217.2 L286.1,224.0 L282.3,224.0 L278.4,240.5 L244.4,229.8 L213.4,224.0M144.5,197.8 L157.1,201.7 L246.4,224.0M157.1,202.7 L152.3,224.0 L154.2,224.0 L150.3,236.0 L131.9,229.8 L133.9,224.0M51.4,207.5 L54.3,191.0 L95.1,197.8 L91.2,224.0 L91.2,224.0 L80.5,280.3 L37.8,269.6M15.5,233.7 L13.6,265.7M77.6,385.0 L21.3,376.3 L13.6,378.2 L8.7,385.0 L0.0,437.4 L-1.9,450.0M364.7,103.7 L355.0,103.7 L345.3,162.9 L345.9,182.3 L337.5,213.3 L329.8,224.0 L330.7,232.7 L362.0,242.4M553.1,39.3 L376.5,22.2 L366.3,28.1 L362.0,56.2 L363.0,83.4 L364.9,89.2 L431.8,102.2 L441.5,98.9 L532.7,112.5 L539.5,119.2 L542.4,126.0M355.0,103.7 L362.0,103.7 L438.6,119.2 L512.3,129.9 L503.6,189.1 L432.8,177.4M438.6,119.2 L432.8,177.4 L428.0,203.6 L420.2,224.0 L420.2,224.0 L411.5,255.0M557.0,109.5 L724.0,159.0 L724.0,158.0 L745.3,164.4 L790.9,125.1 L810.3,-2.0M553.1,126.0 L581.2,129.9 L593.8,134.8 L591.9,149.3 L583.1,153.2 L549.2,149.3M563.7,153.2 L559.9,202.7 L574.4,205.2M582.2,153.2 L573.4,224.0M556.0,203.6 L559.9,202.7M350.4,224.0 L362.0,226.9 L414.4,239.5 L495.9,260.9 L494.9,278.3M350.4,239.5 L362.0,242.4 L411.5,255.0 L511.4,285.1M482.3,313.2 L439.6,450.0M564.7,226.9 L563.7,246.3 L642.3,259.9 L643.3,243.4M642.3,259.9 L645.2,265.7 L614.2,450.0M888.9,8.1 L948.1,18.4 L929.6,135.7 L916.0,224.0 L916.0,224.0 L915.1,238.5 L910.2,272.5M929.6,136.7 L911.8,136.1 L895.7,224.0 L895.7,224.0 L894.7,234.7 L915.1,238.5M843.9,148.9 L855.9,149.3 L859.8,153.2 L846.2,224.0 L846.2,224.0 L842.3,260.9M1086.8,38.2 L991.7,24.2 L980.1,26.7 L971.3,34.9 L964.5,47.5 L936.4,224.0 L935.4,224.0 L927.7,275.4M796.7,247.3 L801.6,238.0 L844.3,241.5M1036.3,298.7 L1035.3,317.1 L1086.8,327.4" stroke="#d0d6e8" stroke-width="6.6"/>
<path d="M1003.3,290.9 L996.6,359.8 L987.4,452.9" stroke="#d0d6e8" stroke-width="9.8" stroke-linecap="butt"/>
<path d="M-3.9,154.2 L19.4,160.0 L77.6,168.1 L120.3,166.8 L194.0,164.8 L219.2,165.8 L259.9,172.6 L316.2,181.3 L362.0,187.1 L362.0,187.1 L426.0,199.7 L521.1,215.3 L536.6,223.0 L724.0,246.9 L840.4,261.8 L918.0,275.4 L1003.3,290.0 L1086.8,302.0" stroke="#d0d6e8" stroke-width="12"/>
<path d="M566.3,-3.9 L548.6,114.4 L529.4,224.0 L518.4,286.1 L505.9,379.2 L497.6,452.9" stroke="#d0d6e8" stroke-width="18.6"/>
<path d="M120.3,170.6 L114.5,224.0 L114.5,224.0 L108.6,249.2 L100.9,301.6 L91.2,340.4 L79.5,385.0 L73.7,418.0 L68.9,450.0M207.6,168.7 L202.7,193.0M259.0,175.5 L252.2,206.5 L246.4,224.0 L246.4,224.0 L244.4,229.8M133.9,224.0 L144.5,197.8 L148.4,179.4 L202.7,193.0 L252.2,207.5 L285.2,217.2 L286.1,224.0 L282.3,224.0 L278.4,240.5 L244.4,229.8 L213.4,224.0M144.5,197.8 L157.1,201.7 L246.4,224.0M157.1,202.7 L152.3,224.0 L154.2,224.0 L150.3,236.0 L131.9,229.8 L133.9,224.0M51.4,207.5 L54.3,191.0 L95.1,197.8 L91.2,224.0 L91.2,224.0 L80.5,280.3 L37.8,269.6M15.5,233.7 L13.6,265.7M77.6,385.0 L21.3,376.3 L13.6,378.2 L8.7,385.0 L0.0,437.4 L-1.9,450.0M364.7,103.7 L355.0,103.7 L345.3,162.9 L345.9,182.3 L337.5,213.3 L329.8,224.0 L330.7,232.7 L362.0,242.4M553.1,39.3 L376.5,22.2 L366.3,28.1 L362.0,56.2 L363.0,83.4 L364.9,89.2 L431.8,102.2 L441.5,98.9 L532.7,112.5 L539.5,119.2 L542.4,126.0M355.0,103.7 L362.0,103.7 L438.6,119.2 L512.3,129.9 L503.6,189.1 L432.8,177.4M438.6,119.2 L432.8,177.4 L428.0,203.6 L420.2,224.0 L420.2,224.0 L411.5,255.0M557.0,109.5 L724.0,159.0 L724.0,158.0 L745.3,164.4 L790.9,125.1 L810.3,-2.0M553.1,126.0 L581.2,129.9 L593.8,134.8 L591.9,149.3 L583.1,153.2 L549.2,149.3M563.7,153.2 L559.9,202.7 L574.4,205.2M582.2,153.2 L573.4,224.0M556.0,203.6 L559.9,202.7M350.4,224.0 L362.0,226.9 L414.4,239.5 L495.9,260.9 L494.9,278.3M350.4,239.5 L362.0,242.4 L411.5,255.0 L511.4,285.1M482.3,313.2 L439.6,450.0M564.7,226.9 L563.7,246.3 L642.3,259.9 L643.3,243.4M642.3,259.9 L645.2,265.7 L614.2,450.0M888.9,8.1 L948.1,18.4 L929.6,135.7 L916.0,224.0 L916.0,224.0 L915.1,238.5 L910.2,272.5M929.6,136.7 L911.8,136.1 L895.7,224.0 L895.7,224.0 L894.7,234.7 L915.1,238.5M843.9,148.9 L855.9,149.3 L859.8,153.2 L846.2,224.0 L846.2,224.0 L842.3,260.9M1086.8,38.2 L991.7,24.2 L980.1,26.7 L971.3,34.9 L964.5,47.5 L936.4,224.0 L935.4,224.0 L927.7,275.4M796.7,247.3 L801.6,238.0 L844.3,241.5M1036.3,298.7 L1035.3,317.1 L1086.8,327.4" stroke="#fff" stroke-width="4.2"/>
<path d="M1003.3,290.9 L996.6,359.8 L987.4,452.9" stroke="#fff" stroke-width="7.4" stroke-linecap="butt"/>
<path d="M-3.9,154.2 L19.4,160.0 L77.6,168.1 L120.3,166.8 L194.0,164.8 L219.2,165.8 L259.9,172.6 L316.2,181.3 L362.0,187.1 L362.0,187.1 L426.0,199.7 L521.1,215.3 L536.6,223.0 L724.0,246.9 L840.4,261.8 L918.0,275.4 L1003.3,290.0 L1086.8,302.0" stroke="#fff" stroke-width="9.6"/>
<path d="M566.3,-3.9 L548.6,114.4 L529.4,224.0 L518.4,286.1 L505.9,379.2 L497.6,452.9" stroke="#fff" stroke-width="16.2"/>
</g>
<text transform="translate(590.5,234.6) rotate(7.8)" textLength="126" lengthAdjust="spacingAndGlyphs" style="font-family:'Liberation Sans',sans-serif;font-size:24px;fill:#111;stroke:#fff;stroke-width:4.5px;paint-order:stroke;stroke-linejoin:round">Federal Blvd</text>
<text transform="translate(1060.8,305.1) rotate(8)" textLength="126" lengthAdjust="spacingAndGlyphs" style="font-family:'Liberation Sans',sans-serif;font-size:24px;fill:#111;stroke:#fff;stroke-width:4.5px;paint-order:stroke;stroke-linejoin:round">Federal Blvd</text>
<text transform="translate(1002.4,355.9) rotate(-84.4)" text-anchor="end" textLength="115" lengthAdjust="spacingAndGlyphs" style="font-family:'Liberation Sans',sans-serif;font-size:24px;fill:#111;stroke:#fff;stroke-width:4.5px;paint-order:stroke;stroke-linejoin:round">Malinecz Rd</text>
<text transform="translate(511,390.4) rotate(-82.4)" text-anchor="end" textLength="91" lengthAdjust="spacingAndGlyphs" style="font-family:'Liberation Sans',sans-serif;font-size:24px;fill:#111;stroke:#fff;stroke-width:4.5px;paint-order:stroke;stroke-linejoin:round">Belair Rd</text>
<text transform="translate(575.5,12) rotate(-82)" text-anchor="start" style="font-family:'Liberation Sans',sans-serif;font-size:24px;fill:#111;stroke:#fff;stroke-width:4.5px;paint-order:stroke;stroke-linejoin:round">El</text>
<text transform="translate(34,214) rotate(-80)" text-anchor="start" style="font-family:'Liberation Sans',sans-serif;font-size:24px;fill:#111;stroke:#fff;stroke-width:4.5px;paint-order:stroke;stroke-linejoin:round">St</text>
<ellipse cx="541.8" cy="225.6" rx="13" ry="3.2" fill="#000" opacity="0.2" style="filter:blur(2.2px)"/>
<path d="M541.8,223.4 C536.8,213.4 519.0999999999999,198.6 519.0999999999999,181.6 A22.7,22.7 0 1 1 564.5,181.6 C564.5,198.6 546.8,213.4 541.8,223.4Z" fill="#8eb31b"/>
<circle cx="541.8" cy="181.6" r="9.6" fill="#a3c24a"/>
<rect x="15" y="13.600000000000001" width="65.5" height="179.1" rx="12" fill="#000" opacity="0.1"/><rect x="19" y="17.6" width="57.5" height="171.1" rx="8" fill="#fff"/>
<path d="M19,76H76.5M19,133H76.5" stroke="#ddd" stroke-width="2"/>
<path d="M38.5,46.5H55.9M47.2,37.8V55.2" stroke="#222" stroke-width="4.6" stroke-linecap="round"/>
<path d="M37.8,104.5H55.2" stroke="#222" stroke-width="4.6" stroke-linecap="round"/>
<path d="M47.2,146.5L54,159.9H40.4Z" fill="#2b2b2b"/><path d="M40.4,164H54L47.2,178.6Z" fill="#cbcbcb"/>
<rect x="15" y="204.5" width="65.5" height="65" rx="12" fill="#000" opacity="0.1"/><rect x="19" y="208.5" width="57.5" height="57" rx="8" fill="#fff"/>
<path d="M47.2,223.3L59.9,231L47.2,238.7L34.5,231Z M34.5,240.2L47.2,249.3L60.6,239.5" fill="none" stroke="#111" stroke-width="3"/>
</svg>
<section class="panel" style="left:1160.2px;top:1742.8px;width:537.8px;height:535.8px;"></section>
<div class="pbar" style="left:1169.6px;top:1752px;width:518.6px;height:57.2px;"></div>
<h2 class="t" style="left:1188.00px;top:1770.70px;font-size:21.40px;line-height:21.40px;color:#121a2d;font-family:'Liberation Mono',monospace;font-weight:400;transform:scaleX(1.0597);-webkit-text-stroke:0.65px #121a2d;">Battery Life</h2>
<svg style="left:1160px;top:1820px" width="538" height="270" viewBox="1160 1820 538 270">
<rect x="1230.9" y="1905.4" width="395.8" height="158" fill="none" stroke="#dcdcdc" stroke-width="12"/>
<path d="M1632.7,1956.4H1648V2012.5H1632.7" fill="none" stroke="#dcdcdc" stroke-width="11.4"/>
<rect x="1245.7" y="1919" width="278.8" height="130.9" fill="#8eb31b"/>
</svg>
<span class="t" style="left:1224.89px;top:2075.88px;font-size:26.60px;line-height:26.60px;color:#868b98;font-family:'Liberation Sans',sans-serif;font-weight:400;transform:scaleX(0.9761);-webkit-text-stroke:0.3px #868b98;">0%</span>
<span class="t" style="left:1567.07px;top:2075.88px;font-size:26.60px;line-height:26.60px;color:#868b98;font-family:'Liberation Sans',sans-serif;font-weight:400;transform:scaleX(0.9667);-webkit-text-stroke:0.3px #868b98;">100%</span>
<span class="t" style="left:1382.14px;top:2085.70px;font-size:64.50px;line-height:64.50px;color:#121a2d;font-family:'Liberation Sans',sans-serif;font-weight:700;transform:scaleX(0.7227);">76%</span>
<span class="t" style="left:1363.19px;top:2160.80px;font-size:28.00px;line-height:28.00px;color:#868b98;font-family:'Liberation Sans',sans-serif;font-weight:400;transform:scaleX(0.9852);-webkit-text-stroke:0.3px #868b98;">Remaining</span>
<span class="t" style="left:1589.34px;top:2245.61px;font-size:19.60px;line-height:19.60px;color:#868b98;font-family:'Liberation Sans',sans-serif;font-weight:400;transform:scaleX(0.9276);-webkit-text-stroke:0.3px #868b98;">15 days ago</span>
<section class="panel" style="left:1726.5px;top:1742.8px;width:537.8px;height:535.8px;"></section>
<div class="pbar" style="left:1735.9px;top:1752px;width:519.2px;height:57.2px;"></div>
<h2 class="t" style="left:1755.91px;top:1770.70px;font-size:21.40px;line-height:21.40px;color:#121a2d;font-family:'Liberation Mono',monospace;font-weight:400;transform:scaleX(1.0503);-webkit-text-stroke:0.65px #121a2d;">Temperature</h2>
<svg style="left:1900px;top:1830px" width="200" height="310" viewBox="1900 1830 200 310">
<path d="M1957.5,2040V1867.8 A37.85,20 0 0 1 2033.2,1867.8 V2040Z" fill="#dcdcdc"/>
<circle cx="1995.4" cy="2067.3" r="56" fill="#dcdcdc"/>
<rect x="1971.7" y="1863.7" width="47.6" height="180" fill="#f4f5f7"/>
<circle cx="1995.4" cy="2067.3" r="41.7" fill="#f4f5f7"/>
<rect x="1977.7" y="2009.1" width="35.4" height="40" fill="#8eb31b"/>
<circle cx="1995.4" cy="2067.3" r="35.7" fill="#8eb31b"/>
</svg>
<span class="t" style="left:2045.09px;top:1876.28px;font-size:26.60px;line-height:26.60px;color:#868b98;font-family:'Liberation Sans',sans-serif;font-weight:400;transform:scaleX(0.9550);-webkit-text-stroke:0.3px #868b98;">100</span>
<span class="t" style="left:2046.10px;top:2005.28px;font-size:26.60px;line-height:26.60px;color:#868b98;font-family:'Liberation Sans',sans-serif;font-weight:400;transform:scaleX(0.9689);-webkit-text-stroke:0.3px #868b98;">0</span>
<span class="t" style="left:1968.57px;top:2139.20px;font-size:64.50px;line-height:64.50px;color:#121a2d;font-family:'Liberation Sans',sans-serif;font-weight:700;transform:scaleX(0.7583);">17</span>
<span class="t" style="left:1980.11px;top:2212.24px;font-size:27.00px;line-height:27.00px;color:#868b98;font-family:'Liberation Sans',sans-serif;font-weight:400;transform:scaleX(1.0032);-webkit-text-stroke:0.3px #868b98;">°C</span>
<span class="t" style="left:2155.73px;top:2245.61px;font-size:19.60px;line-height:19.60px;color:#868b98;font-family:'Liberation Sans',sans-serif;font-weight:400;transform:scaleX(0.9305);-webkit-text-stroke:0.3px #868b98;">15 days ago</span>
<footer class="abs" style="left:0;top:2346px;width:2291px;height:95px;border-top:2px solid #e7e7e7;box-sizing:border-box;background:linear-gradient(#ffffff 0%,#fcfcfc 35%,#f6f6f6 70%,#ebebeb 97%,#e6e6e6 100%);">
<div class="abs" style="left:0;bottom:0;width:150px;height:93px;background:radial-gradient(ellipse 150px 93px at 0% 100%,rgba(255,255,255,1) 0%,rgba(255,255,255,0.9) 35%,rgba(255,255,255,0) 100%);"></div>
<svg style="left:0;top:85px" width="6" height="8" viewBox="0 0 6 8"><path d="M0,2.5Q1.5,5 3.5,8H0Z" fill="#0a0a14"/></svg>
</footer>
<p class="t" style="left:983.39px;top:2391.18px;font-size:26.60px;line-height:26.60px;color:#222;font-family:'Liberation Sans',sans-serif;font-weight:400;transform:scaleX(1.0174);-webkit-text-stroke:0.3px #222;">© 2020. All rights reserved.</p>
</body></html>
